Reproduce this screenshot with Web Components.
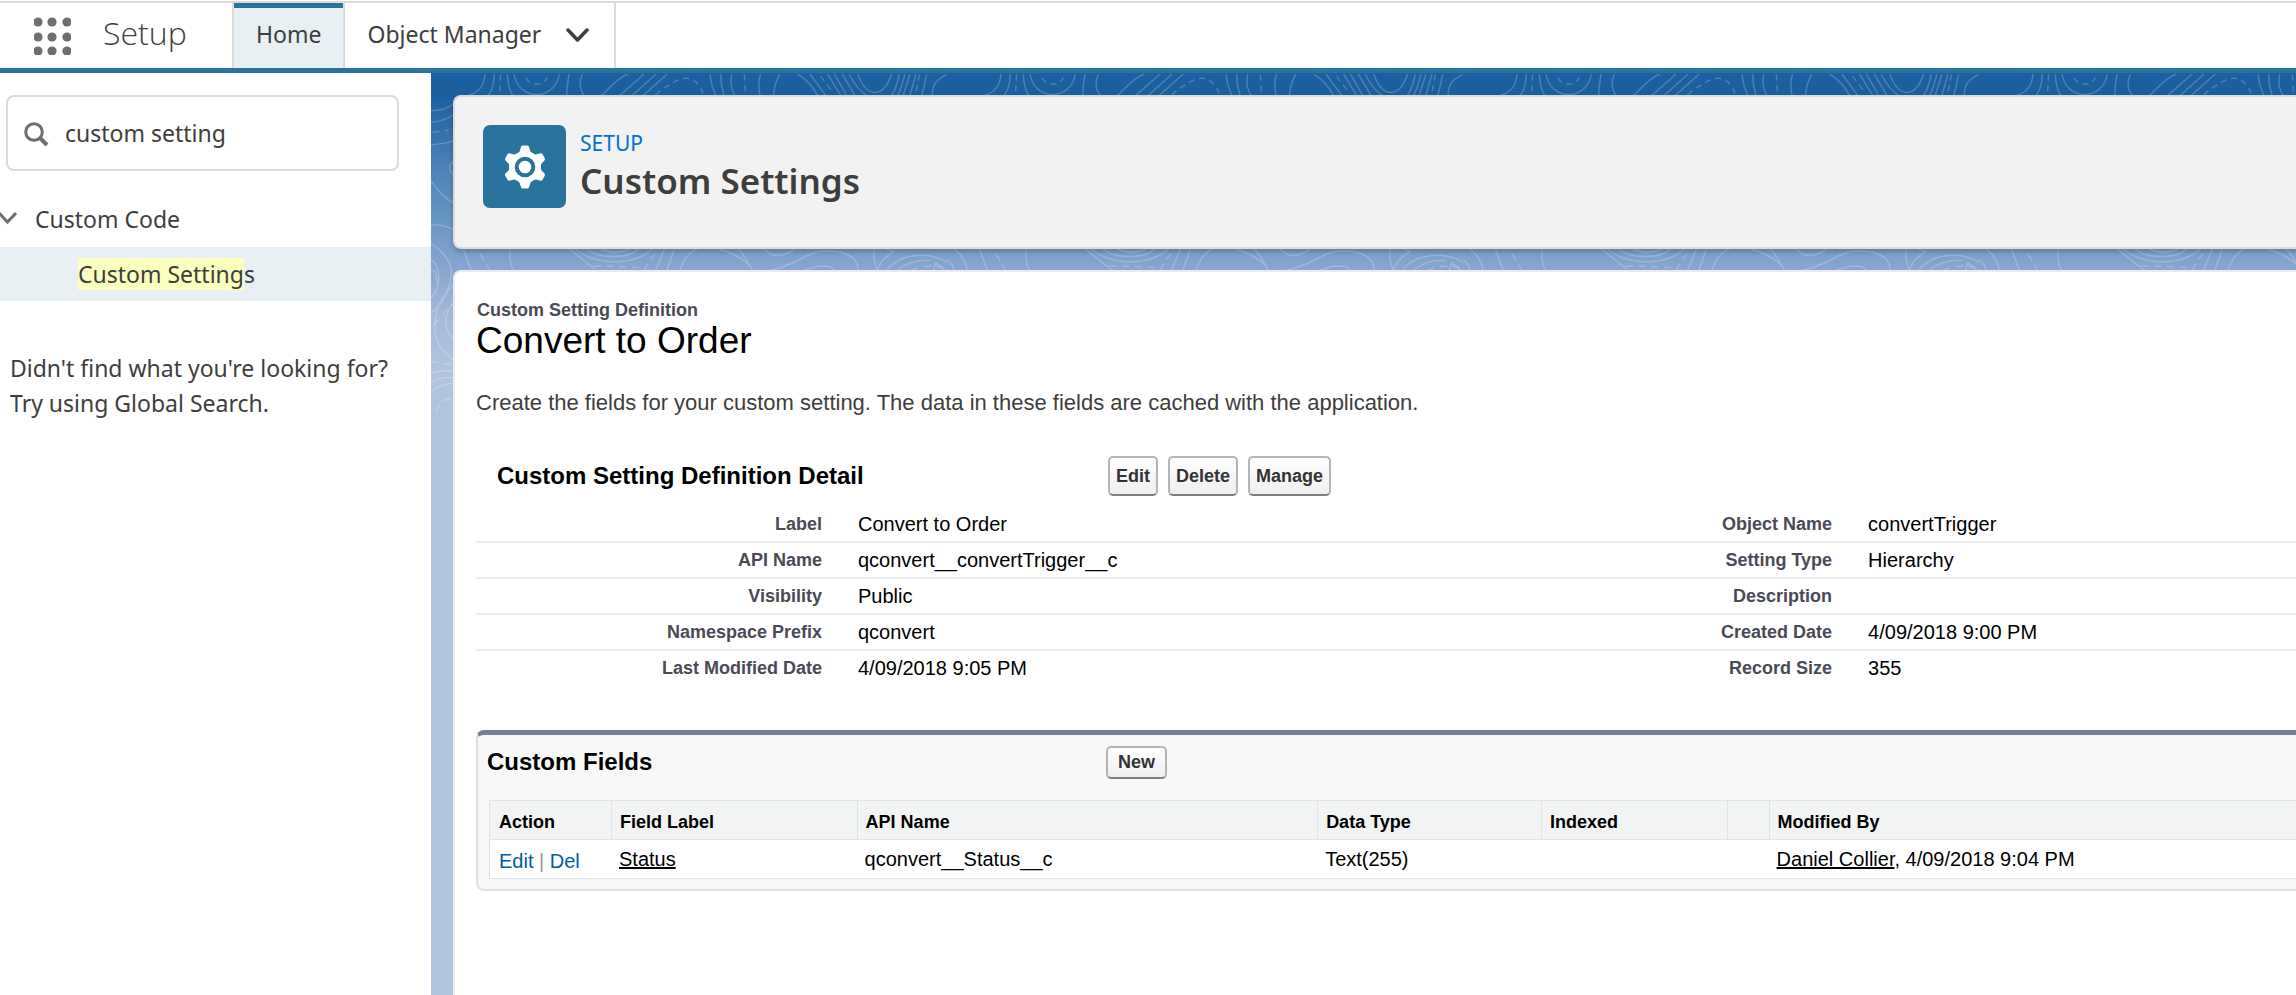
<!DOCTYPE html>
<html lang="en">
<head>
<meta charset="utf-8">
<title>Custom Settings | Setup</title>
<style>
  body { margin: 0; background: #fff; color: #3e3e3c; font: 23px/35px "Noto Sans", "Open Sans", sans-serif; }
</style>
</head>
<body>
<setup-app>
  <setup-header slot="header"></setup-header>
  <setup-sidebar slot="sidebar">
    <tree-group label="Custom Code">
      <tree-leaf><mark slot="match">Custom Setting</mark>s</tree-leaf>
    </tree-group>
  </setup-sidebar>
  <page-banner eyebrow="Setup">Custom Settings</page-banner>
  <content-card>
    <page-title eyebrow="Custom Setting Definition" heading="Convert to Order">Create the fields for your custom setting. The data in these fields are cached with the application.</page-title>
    <section-bar class="detail" heading="Custom Setting Definition Detail">
      <classic-button>Edit</classic-button>
      <classic-button>Delete</classic-button>
      <classic-button>Manage</classic-button>
    </section-bar>
    <detail-table></detail-table>
    <related-list heading="Custom Fields">
      <classic-button slot="actions" compact>New</classic-button>
      <fields-table></fields-table>
    </related-list>
  </content-card>
</setup-app>

<script>
const define = (name, css, html) => customElements.define(name, class extends HTMLElement {
  connectedCallback() {
    if (this.shadowRoot) return;
    const root = this.attachShadow({ mode: "open" });
    const tpl = document.createElement("template");
    tpl.innerHTML = `<style>*{box-sizing:border-box}${css}</style>${typeof html === "function" ? html(this) : html}`;
    root.append(tpl.content.cloneNode(true));
  }
});

/* Contour lines on the page backdrop; one tile is 516px wide. */
const contours = `
<svg aria-hidden="true" width="100%" height="340">
  <defs>
    <pattern id="topo" width="516" height="340" patternUnits="userSpaceOnUse">
      <g fill="none" stroke="#fff" stroke-opacity=".2" stroke-width="4.5">
        <g transform="translate(-1,-5) scale(.3333)">
          <path d="M165 18Q162 70 115 82M193 18Q192 60 175 82M232 18Q233 60 248 82M252 18C265 100 375 100 388 18M418 18Q412 40 410 82M457 18C445 45 450 65 462 82M595 18C560 30 540 60 515 82M642 18L570 82M678 18L607 82M712 18L640 82M840 18Q845 60 858 82M872 18Q872 50 882 82M905 18C900 50 905 65 915 82M992 18Q982 45 990 82M1050 18C1035 40 1033 60 1030 82M1103 18Q1140 40 1163 82M1140 18L1187 82M1193 18L1232 82M1213 18L1250 82M1237 18L1275 82M1257 18Q1285 70 1310 82M1283 18C1310 92 1360 92 1385 18M1408 18Q1400 60 1385 82M1425 18Q1415 60 1403 82M1440 18L1420 82M1458 18L1440 82M1490 18Q1485 50 1475 82M1558 18C1520 30 1505 50 1507 82"/>
          <path stroke-dasharray="18 14" d="M212 20L208 82M288 30C300 55 340 55 352 28M677 80C740 30 790 0 822 82M943 20L947 82M1172 25L1210 75M1468 20L1458 75"/>
        </g>
        <g transform="translate(19,171) scale(.3333)">
          <path d="M40 14L65 80M180 10C178 50 182 70 192 80M352 10L440 80M370 10C430 68 560 68 612 10M405 10C440 47 540 47 570 10M445 8C470 30 530 30 545 8M645 10L616 80M675 10L650 80M690 80C705 35 725 15 762 10M790 10C850 25 900 55 908 80M860 8Q885 35 908 80M938 10C965 45 1000 40 1040 10M955 80C1040 65 1060 30 1110 22C1170 18 1225 30 1225 80M1060 80C1100 62 1140 60 1155 80M1275 10C1268 40 1275 60 1282 80C1290 50 1310 35 1332 22L1300 10M1310 80C1350 18 1480 18 1512 80M1450 80L1458 56L1485 80M1500 10C1540 30 1548 60 1548 80M1340 80C1370 58 1400 45 1440 50"/>
          <path stroke-dasharray="22 16" d="M90 30L120 80M430 66Q520 66 590 74M615 28L580 80M1385 80C1410 62 1480 62 1500 80"/>
        </g>
        <g transform="translate(-3,-5) scale(.3333)">
          <path d="M9 127Q50 130 80 105M9 163Q50 160 80 138M9 230Q50 228 80 218M80 278C60 290 60 310 80 325M9 338Q40 385 80 408M9 470Q50 470 80 486M9 527C60 560 80 600 65 645C55 690 30 720 9 735M9 575C35 590 45 650 9 690M9 605L22 612L28 650M80 645C40 690 20 720 20 775C20 820 40 850 80 878M80 700C45 740 45 790 80 815M9 915Q40 905 80 910M9 942Q40 925 80 930M9 972Q40 945 80 947"/>
          <path stroke-dasharray="22 16" d="M14 193L62 187M18 770L74 708M10 880L80 893M25 1030Q40 990 74 992"/>
        </g>
      </g>
    </pattern>
  </defs>
  <rect y="1" width="100%" height="339" fill="url(#topo)"/>
</svg>`;

define("setup-app", `
  :host { display: flex; flex-direction: column; min-height: 100vh; }
  .body { flex: 1; display: grid; grid-template-columns: 431px minmax(0, 1fr); }
  main { position: relative; isolation: isolate; display: flex; flex-direction: column; gap: 21px; padding: 22px 0 0 22px; overflow: hidden;
    background: linear-gradient(#1b5f9f 0, #1b5f9f 22px, #4a7fb8 90px, #6795c2 145px, #85a6cf 195px, #a4badb 245px, #b0c4df 290px, #b0c4df 100%); }
  main > svg { position: absolute; inset: 0 0 auto 0; z-index: -1; }`,
  `<slot name="header"></slot>
   <div class="body"><slot name="sidebar"></slot><main>${contours}<slot></slot></main></div>`);

define("setup-header", `
  :host { display: flex; height: 72px; margin-top: 1px; box-sizing: border-box; border-top: 2px solid #dddbda; border-bottom: 5px solid #2a739e; background: #fff; }
  button { border: 0; background: none; padding: 0; margin: 0; display: flex; align-items: center; }
  .launcher { padding: 0 32px 0 34px; }
  .app { font: 300 32px/60px "Open Sans", "Noto Sans", sans-serif; width: 129px; }
  nav { display: flex; border-right: 2px solid #dddbda; }
  a { color: inherit; text-decoration: none; line-height: 63px; white-space: nowrap; }
  .tab { padding: 0 22px; }
  .tab[aria-current] { border: solid #dddbda; border-width: 0 2px; background: #e8f0f4; box-shadow: inset 0 5px #2a739e; }
  .tab:not([aria-current]) { padding-right: 0; }
  .menu { padding: 0 25px 2px; }`,
  `<button class="launcher" aria-label="App Launcher"><svg width="37" height="38" fill="#706e6b">
     ${[5, 20, 34].map(y => [4, 18, 33].map(x => `<circle cx="${x}" cy="${y}" r="4.6"/>`).join("")).join("")}</svg></button>
   <span class="app">Setup</span>
   <nav aria-label="Setup"><a class="tab" href="#home" aria-current="page">Home</a><a class="tab" href="#objects">Object Manager</a>
   <button class="menu" aria-label="Object Manager menu"><svg width="23" height="14" fill="none" stroke="#3e3e3c" stroke-width="3.500" stroke-linecap="round" stroke-linejoin="round"><path d="M2 2L11.500 12L21 2"/></svg></button></nav>`);

define("setup-sidebar", `
  :host { display: block; background: #fff; }
  .search { display: flex; align-items: center; gap: 16px; height: 76px; margin: 22px 32px 20px 6px; padding: 0 16px; border: 2px solid #dddbda; border-radius: 8px; }
  .search svg { flex: none; margin-top: 3px; }
  input { flex: 1; min-width: 0; border: 0; outline: 0; padding: 0; background: none; color: inherit; font: inherit; }
  p { margin: 50px 10px 0; }`,
  `<div class="search"><svg width="25" height="25" fill="none" stroke="#706e6b" stroke-width="3"><circle cx="10" cy="10" r="8.300"/><path stroke-width="4" d="M16 16L23 23"/></svg>
     <input type="text" aria-label="Quick Find" value="custom setting"></div>
   <slot></slot>
   <p>Didn't find what you're looking for?<br>Try using Global Search.</p>`);

define("tree-group", `
  :host { display: block; }
  button { display: flex; align-items: center; gap: 17px; width: 100%; height: 56px; border: 0; padding: 0; background: none; color: inherit; font: inherit; }
  svg { flex: none; }`,
  el => `<button aria-expanded="true"><svg width="18" height="14" fill="none" stroke="#706e6b" stroke-width="3"><path d="M-1 1L7.500 10L16 1"/></svg>${el.getAttribute("label")}</button><slot></slot>`);

define("tree-leaf", `
  :host { display: block; background: #e8f0f4; }
  a { display: block; padding-left: 78px; line-height: 54px; color: inherit; text-decoration: none; }
  ::slotted(mark) { background: #faffbd; color: inherit; }`,
  `<a href="#custom-settings"><slot name="match"></slot><slot></slot></a>`);

define("page-banner", `
  :host { display: flex; align-items: center; gap: 14px; height: 154px; box-sizing: border-box; padding: 0 0 11px 28px; border: 2px solid #dddbda; border-right: 0; border-radius: 8px 0 0 8px; background: #f2f2f2; box-shadow: 0 3px 5px rgba(0,0,0,.22); }
  .icon { display: grid; place-items: center; width: 83px; height: 83px; border-radius: 7px; background: #2a739e; }
  .eyebrow { font-size: 21px; line-height: 28px; color: #0070d2; text-transform: uppercase; }
  h1 { margin: 0; font: 600 35px/48px "Noto Sans", "Open Sans", sans-serif; }`,
  el => `<span class="icon"><svg width="44" height="44" viewBox="-22 -22 44 44" fill="#fff">
      <circle r="16"/>
      ${[0, 60, 120, 180, 240, 300].map(a => `<path transform="rotate(${a})" d="M-7.500 -13Q-5 -15 -4.500 -18.500Q-4 -21.500 -2.500 -21.500H2.500Q4 -21.500 4.500 -18.500Q5 -15 7.500 -13Z"/>`).join("")}
      <circle r="8.300" fill="#fff" stroke="#2a739e" stroke-width="4"/></svg></span>
    <div><div class="eyebrow">${el.getAttribute("eyebrow")}</div><h1><slot></slot></h1></div>`);

define("content-card", `
  :host { flex: 1; display: block; padding: 27px 0 40px 21px; border: 2px solid #ebeaea; border-width: 2px 0 0 2px; border-radius: 8px 0 0 0; background: #fff; font-family: "Liberation Sans", Arial, sans-serif; }
  ::slotted(.detail) { margin-top: 39px; padding-left: 21px; }`,
  `<slot></slot>`);

define("page-title", `
  :host { display: block; }
  .eyebrow { padding-left: 1px; font-size: 18px; line-height: 22px; font-weight: bold; color: #4a4a56; }
  h2 { margin: 0; font-size: 37px; line-height: 40px; font-weight: normal; color: #000; }
  p { margin: 28px 0 0; font-size: 22px; line-height: 28px; }`,
  el => `<div class="eyebrow">${el.getAttribute("eyebrow")}</div><h2>${el.getAttribute("heading")}</h2><p><slot></slot></p>`);

define("section-bar", `
  :host { display: flex; align-items: center; }
  h3 { flex: 0 0 611px; margin: 0; font-size: 24px; line-height: 28px; color: #000; }
  div { display: flex; gap: 10px; }`,
  el => `<h3>${el.getAttribute("heading")}</h3><div><slot></slot></div>`);

define("classic-button", `
  :host { display: block; }
  button { display: block; height: 40px; margin: 0; padding: 0 6px; border: 2px solid #b5b5b5; border-bottom-color: #7f7f7f; border-radius: 5px; background: linear-gradient(#fff, #efefef); color: #333; font: bold 18px/34px "Liberation Sans", Arial, sans-serif; }
  :host([compact]) button { height: 33px; padding: 0 10px; line-height: 27px; }`,
  `<button type="button"><slot></slot></button>`);

const details = [
  ["Label", "Convert to Order", "Object Name", "convertTrigger"],
  ["API Name", "qconvert__convertTrigger__c", "Setting Type", "Hierarchy"],
  ["Visibility", "Public", "Description", ""],
  ["Namespace Prefix", "qconvert", "Created Date", "4/09/2018 9:00 PM"],
  ["Last Modified Date", "4/09/2018 9:05 PM", "Record Size", "355"]
];
define("detail-table", `
  :host { display: block; margin-top: 11px; }
  table { width: 100%; table-layout: fixed; border-spacing: 0; line-height: 24px; }
  th, td { height: 36px; padding: 0 18px; border-bottom: 2px solid #ebebeb; }
  tr:last-child > * { border-bottom-color: transparent; }
  th { text-align: right; font-size: 18px; color: #4a4a56; }
  td { font-size: 20px; color: #000; }`,
  `<table><colgroup><col style="width:20%"><col style="width:35.5%"><col style="width:20%"><col></colgroup>
   ${details.map(([a, b, c, d]) => `<tr><th scope="row">${a}</th><td>${b}</td><th scope="row">${c}</th><td>${d}</td></tr>`).join("")}</table>`);

define("related-list", `
  :host { display: block; margin-top: 43px; padding: 11px 0 10px 11px; border: 2px solid #dde1e5; border-top: 5px solid #747e96; border-right: 0; border-radius: 8px 0 0 8px; background: #f8f8f8; }
  header { display: flex; align-items: center; margin-bottom: 21px; }
  h3 { flex: 0 0 619px; margin: 0 0 0 -2px; padding-bottom: 2px; font-size: 24px; line-height: 28px; color: #000; }`,
  el => `<header><h3>${el.getAttribute("heading")}</h3><slot name="actions"></slot></header><slot></slot>`);

define("fields-table", `
  :host { display: block; }
  table { width: 100%; table-layout: fixed; border-spacing: 0; border: 1px solid #e0e3e5; border-right: 0; background: #fff; line-height: 24px; color: #000; }
  th { height: 39px; padding: 3px 8px 0; border: solid #e0e3e5; border-width: 0 0 1px 1px; background: #f2f3f3; text-align: left; font-size: 18px; }
  td { height: 38px; padding: 0 8px 1px; font-size: 20px; }
  th:first-child { border-left: 0; padding-left: 9px; }
  td:first-child { padding: 4px 9px 0; color: #999; }
  a { color: #000; }
  td:first-child a { color: #015ba7; text-decoration: none; }`,
  `<table><colgroup><col style="width:6.7%"><col style="width:13.6%"><col style="width:25.5%"><col style="width:12.4%"><col style="width:10.3%"><col style="width:2.3%"><col></colgroup>
   <thead><tr><th>Action</th><th>Field Label</th><th>API Name</th><th>Data Type</th><th>Indexed</th><th></th><th>Modified By</th></tr></thead>
   <tbody><tr><td><a href="#edit">Edit</a> | <a href="#del">Del</a></td><td><a href="#status">Status</a></td><td>qconvert__Status__c</td><td>Text(255)</td><td></td><td></td><td><a href="#user">Daniel Collier</a>, 4/09/2018 9:04 PM</td></tr></tbody></table>`);
</script>
</body>
</html>
